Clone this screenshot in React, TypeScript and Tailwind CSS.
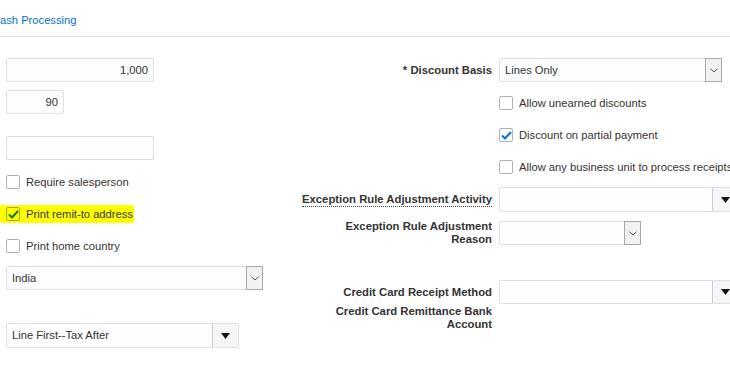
import React from "react";

const font = { fontFamily: '"Liberation Sans", Arial, sans-serif' };

function TextInput({ w, value, className = "" }: { w: string; value?: string; className?: string }) {
  return (
    <div
      className={`${w} h-[24px] border border-[#dbe1e8] bg-[#fcfdfe] rounded-[2px] flex items-center justify-end pr-[5px] text-[11.2px] text-[#333] ${className}`}
    >
      {value}
    </div>
  );
}

function ChevronSelect({ w, value, className = "" }: { w: string; value?: string; className?: string }) {
  return (
    <div
      className={`${w} h-[24px] border border-[#dbe1e8] bg-[#fcfdfe] rounded-[2px] flex items-stretch text-[11.2px] text-[#333] shrink-0 ${className}`}
    >
      <div className="flex-1 flex items-center pl-[5px]">{value}</div>
      <div className="w-[17px] border border-[#a8a8a8] bg-[#f2f2f2] flex items-center justify-center -my-px -mr-px">
        <svg width="8" height="5" viewBox="0 0 8 5">
          <path d="M0.5 0.8 L4 4 L7.5 0.8" fill="none" stroke="#555" strokeWidth="1" />
        </svg>
      </div>
    </div>
  );
}

function TriSelect({ w, value, h = "h-[25px]", className = "" }: { w: string; value?: string; h?: string; className?: string }) {
  return (
    <div
      className={`${w} ${h} border border-[#dbe1e8] bg-[#fcfdfe] rounded-[2px] flex items-stretch text-[11.2px] text-[#333] shrink-0 ${className}`}
    >
      <div className="flex-1 flex items-center pl-[5px]">{value}</div>
      <div className="w-[26px] border-l border-[#c6cfd8] bg-[#f4f6f8] flex items-center justify-center">
        <svg width="9" height="6" viewBox="0 0 9 6">
          <path d="M0 0 L9 0 L4.5 6 Z" fill="#111" />
        </svg>
      </div>
    </div>
  );
}

function Checkbox({ checked, label, hl = false }: { checked?: boolean; label: string; hl?: boolean }) {
  return (
    <div className="flex items-center h-[14px] gap-[6px] text-[11.2px] text-[#333] whitespace-nowrap">
      <div
        className={`w-[14px] h-[14px] shrink-0 border rounded-[2px] flex items-center justify-center ${
          hl ? "border-[#a3a32a] bg-[#ffff00]" : "border-[#a9b1b9] bg-white"
        }`}
      >
        {checked && (
          <svg width="11" height="9" viewBox="0 0 11 9">
            <path
              d="M1 4.5 L4 7.5 L10 1"
              fill="none"
              stroke={hl ? "#0d7a12" : "#0a72d6"}
              strokeWidth="2"
            />
          </svg>
        )}
      </div>
      <span>{label}</span>
    </div>
  );
}

const labelCls = "w-[202px] shrink-0 text-right text-[11.3px] font-bold text-[#333]";

export default function App() {
  return (
    <div className="w-[730px] h-[383px] overflow-hidden bg-white" style={font}>
      <div className="h-[37px] border-b border-[#d6dee6] flex items-center pt-[4px] text-[11.2px] text-[#0572ce]">
        ash Processing
      </div>
      <div className="flex">
        {/* Left column */}
        <div className="w-[290px] shrink-0 pl-[6px] flex flex-col">
          <TextInput w="w-[148px]" value="1,000" className="mt-[21px]" />
          <TextInput w="w-[58px]" value="90" className="mt-[8px]" />
          <TextInput w="w-[148px]" className="mt-[22px]" />
          <div className="mt-[15px]">
            <Checkbox label="Require salesperson" />
          </div>
          <div className="mt-[16px] -ml-[6px] pl-[6px] w-[134px] py-[2px] bg-[#ffff00] rounded-[2px]">
            <Checkbox label="Print remit-to address" checked hl />
          </div>
          <div className="mt-[16px]">
            <Checkbox label="Print home country" />
          </div>
          <ChevronSelect w="w-[257px]" value="India" className="mt-[13px]" />
          <TriSelect w="w-[233px]" value="Line First--Tax After" className="mt-[33px]" />
        </div>
        {/* Right column */}
        <div className="flex-1 min-w-0 flex flex-col">
          <div className="flex items-center mt-[21px]">
            <div className={labelCls}>* Discount Basis</div>
            <ChevronSelect w="w-[223px]" value="Lines Only" className="ml-[7px]" />
          </div>
          <div className="ml-[209px] mt-[14px]">
            <Checkbox label="Allow unearned discounts" />
          </div>
          <div className="ml-[209px] mt-[18px]">
            <Checkbox label="Discount on partial payment" checked />
          </div>
          <div className="ml-[209px] mt-[18px]">
            <Checkbox label="Allow any business unit to process receipts" />
          </div>
          <div className="flex items-center mt-[13px]">
            <div className={`${labelCls} flex justify-end`}>
              <span className="border-b border-dotted border-[#444] leading-[14px] whitespace-nowrap">
                Exception Rule Adjustment Activity
              </span>
            </div>
            <TriSelect w="w-[240px]" className="ml-[7px]" />
          </div>
          <div className="flex items-center mt-[8px]">
            <div className={`${labelCls} leading-[13px]`}>
              Exception Rule Adjustment
              <br />
              Reason
            </div>
            <ChevronSelect w="w-[142px]" className="ml-[7px]" />
          </div>
          <div className="flex items-center mt-[34px]">
            <div className={labelCls}>Credit Card Receipt Method</div>
            <TriSelect w="w-[240px]" h="h-[24px]" className="ml-[7px]" />
          </div>
          <div className={`${labelCls} leading-[13px] mt-[1px]`}>
            Credit Card Remittance Bank
            <br />
            Account
          </div>
        </div>
      </div>
    </div>
  );
}
